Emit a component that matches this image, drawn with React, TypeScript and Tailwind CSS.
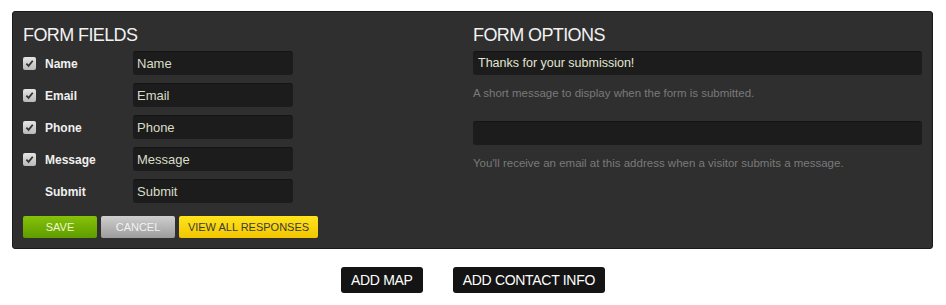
import React from "react";

const fields = [
  { label: "Name", checked: true },
  { label: "Email", checked: true },
  { label: "Phone", checked: true },
  { label: "Message", checked: true },
  { label: "Submit", checked: false },
];

function Check() {
  return (
    <div className="w-[13px] h-[13px] rounded-[2px] bg-gradient-to-b from-[#e6e6e6] to-[#b8b8b8] flex items-center justify-center">
      <svg width="9" height="9" viewBox="0 0 10 10">
        <path d="M1.5 5.2 L4 7.6 L8.6 2" fill="none" stroke="#333" strokeWidth="2" />
      </svg>
    </div>
  );
}

export default function App() {
  return (
    <div className="w-[946px] h-[305px] bg-white pt-[11px] pl-[12px]" style={{ fontFamily: '"Liberation Sans", Arial, sans-serif' }}>
      <div className="w-[921px] h-[238px] rounded-[3px] border border-[#1a1a1a] bg-[#2f2f2f] flex pl-[10px] pt-[12px]">
        <div className="w-[450px] flex flex-col">
          <div className="text-[18px] leading-[22px] text-[#f2f2f2] font-light tracking-[-0.6px] h-[27px]">FORM FIELDS</div>
          <div className="flex flex-col gap-[8px]">
            {fields.map((f) => (
              <div key={f.label} className="flex items-center h-[24px]">
                <div className="w-[22px] flex">{f.checked && <Check />}</div>
                <div className="w-[88px] text-[12px] font-bold text-[#f0f0f0] pt-[1px]">{f.label}</div>
                <div className="w-[160px] h-[24px] rounded-[3px] bg-[#1c1c1c] border-t border-[#141414] flex items-center pl-[4px] text-[13px] text-[#d8dcc8]">
                  {f.label}
                </div>
              </div>
            ))}
          </div>
          <div className="flex gap-[4px] mt-[13px]">
            <div className="w-[74px] h-[22px] rounded-[2px] bg-gradient-to-b from-[#86c20a] to-[#5f9c00] flex items-center justify-center text-[11px] text-[#eef7d0]">SAVE</div>
            <div className="w-[74px] h-[22px] rounded-[2px] bg-gradient-to-b from-[#cfcfcf] to-[#9c9c9c] flex items-center justify-center text-[11px] text-[#f2f2f2]">CANCEL</div>
            <div className="w-[139px] h-[22px] rounded-[2px] bg-gradient-to-b from-[#ffe41a] to-[#f2c600] flex items-center justify-center text-[11px] text-[#3a3a3a]">VIEW ALL RESPONSES</div>
          </div>
        </div>
        <div className="w-[449px] flex flex-col">
          <div className="text-[18px] leading-[22px] text-[#f2f2f2] font-light tracking-[-0.6px] h-[27px]">FORM OPTIONS</div>
          <div className="h-[24px] rounded-[3px] bg-[#1c1c1c] border-t border-[#141414] flex items-center pl-[5px] text-[12.5px] text-[#e2e6d2]">
            Thanks for your submission!
          </div>
          <div className="text-[11.5px] text-[#7a7a7a] mt-[10px] h-[36px]">A short message to display when the form is submitted.</div>
          <div className="h-[24px] rounded-[3px] bg-[#1c1c1c] border-t border-[#141414]"></div>
          <div className="text-[11.5px] text-[#7a7a7a] mt-[10px]">You'll receive an email at this address when a visitor submits a message.</div>
        </div>
      </div>
      <div className="flex justify-center gap-[30px] mt-[18px] pr-[12px]">
        <div className="h-[26px] px-[10px] rounded-[3px] bg-[#141414] text-white text-[14px] tracking-[-0.3px] flex items-center">ADD MAP</div>
        <div className="h-[26px] px-[10px] rounded-[3px] bg-[#141414] text-white text-[14px] tracking-[-0.3px] flex items-center">ADD CONTACT INFO</div>
      </div>
    </div>
  );
}
